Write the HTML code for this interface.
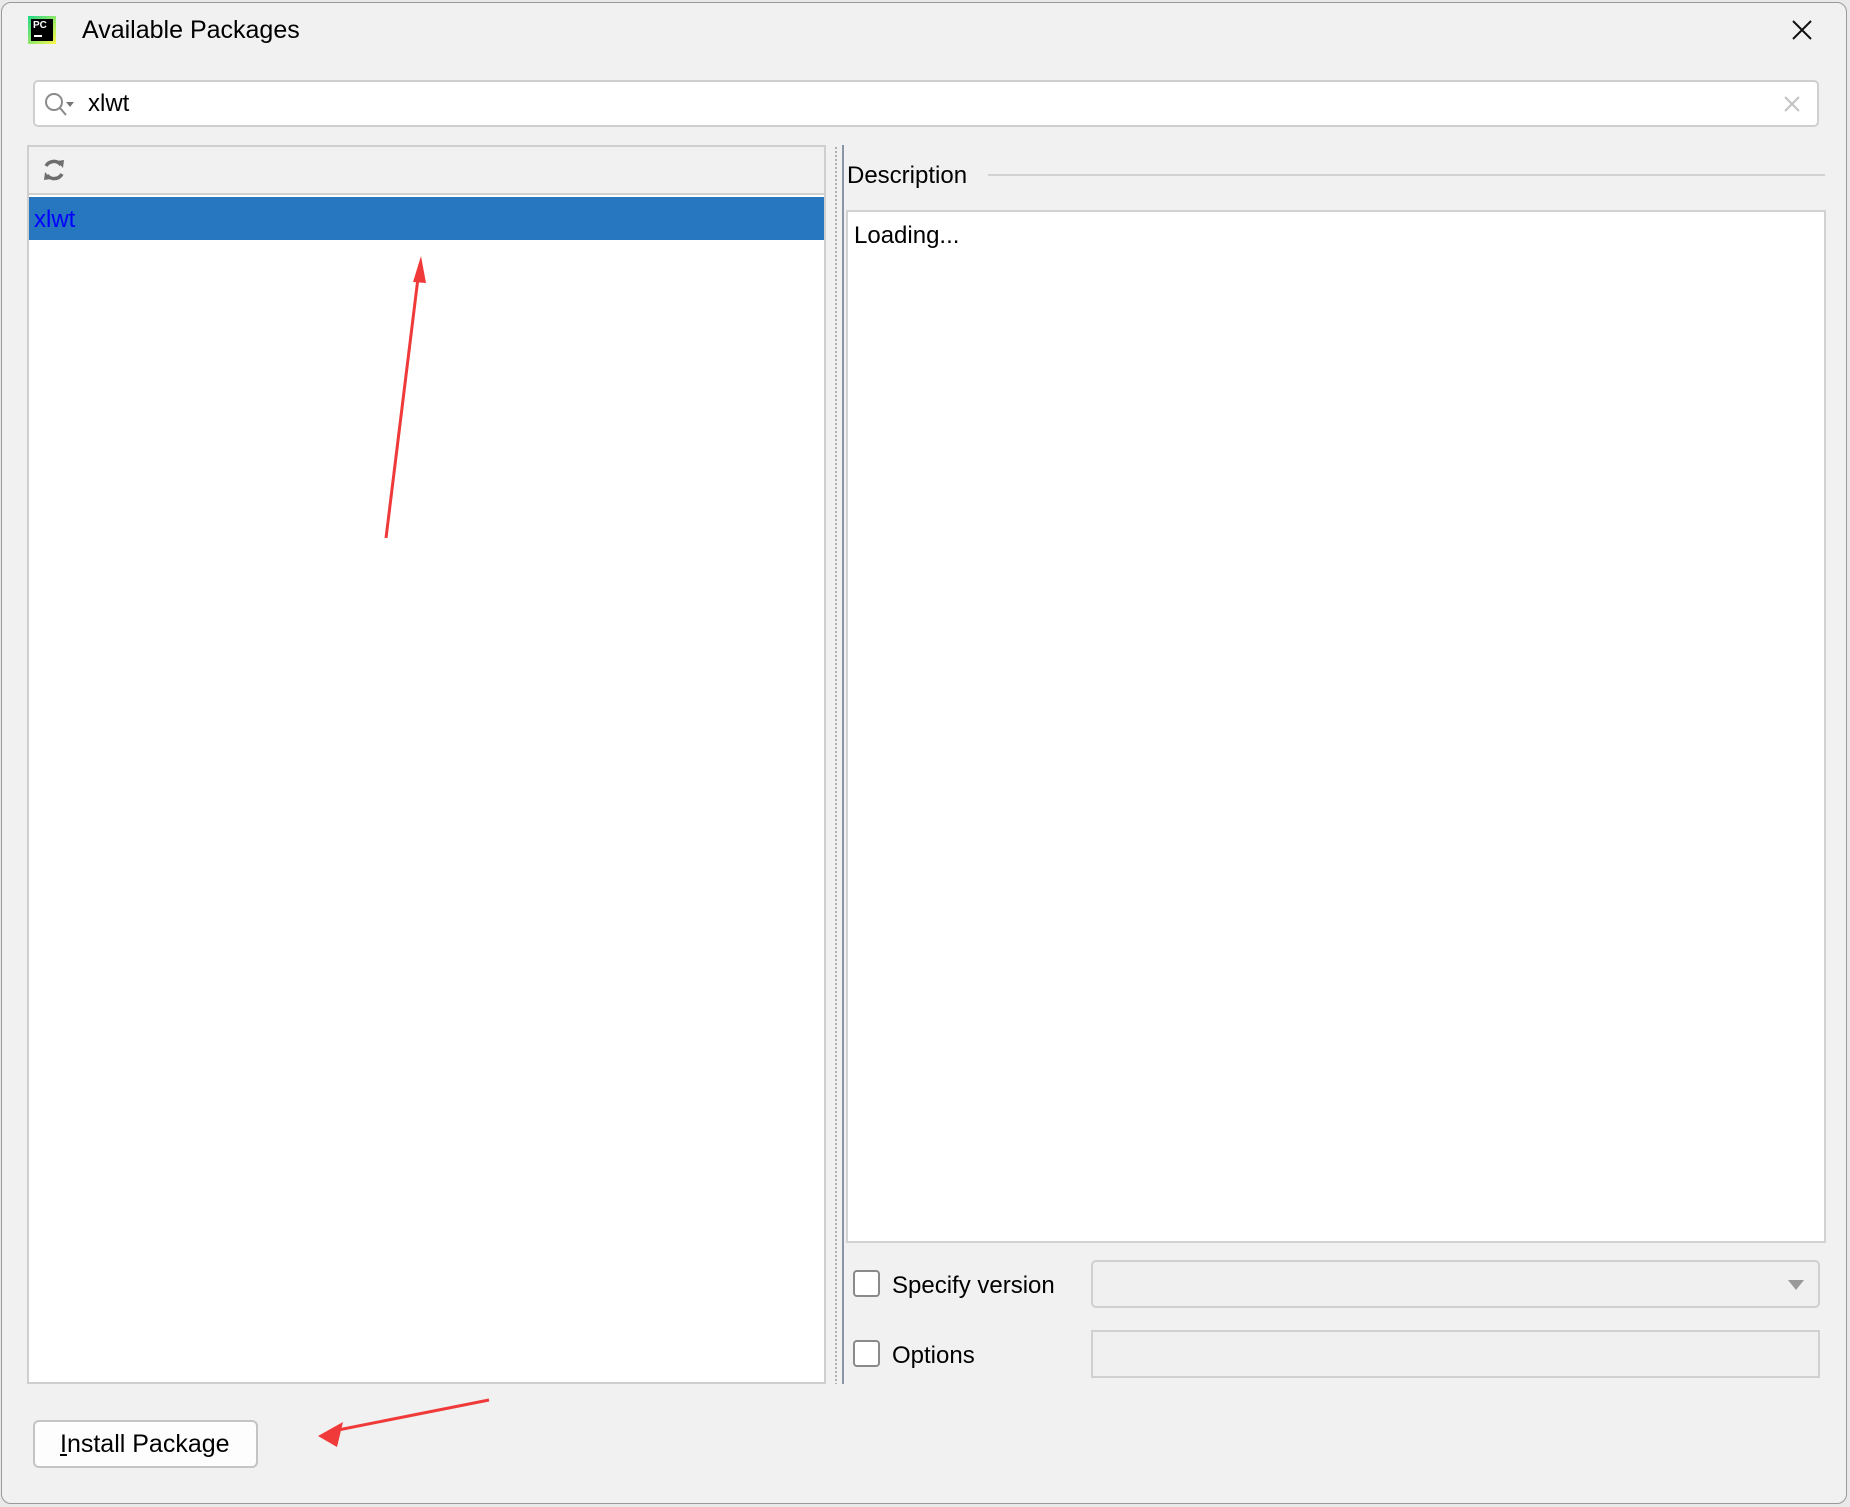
<!DOCTYPE html>
<html><head><meta charset="utf-8"><style>
*{box-sizing:border-box;margin:0;padding:0}
body{width:1850px;height:1507px;background:#e9e9e9;position:relative;overflow:hidden;font-family:"Segoe UI","Liberation Sans",sans-serif;color:#000}
.a{position:absolute}
.win{left:1px;top:2px;width:1846px;height:1502px;background:#f1f1f1;border:1px solid #9a9a9a;border-radius:10px}
.t{font-size:24px;white-space:nowrap}
</style></head><body>
<div class="a win"></div>
<div class="a" style="left:28px;top:16px;width:28px;height:28px;background:linear-gradient(135deg,#21d789,#fcf84a);"></div>
<div class="a" style="left:31px;top:19px;width:22px;height:22px;background:#000;color:#fff;font:bold 10px 'Liberation Sans',sans-serif;padding:1px 0 0 2px">PC<div style="position:absolute;left:3px;top:16px;width:8px;height:2px;background:#fff"></div></div>
<div class="a t" style="left:82px;top:16px;font-size:25px">Available Packages</div>
<svg class="a" style="left:1790px;top:18px" width="24" height="24"><path d="M3 3L21 21M21 3L3 21" stroke="#111" stroke-width="2"/></svg>
<div class="a" style="left:33px;top:80px;width:1786px;height:47px;background:#fff;border:2px solid #cfcfcf;border-radius:5px"></div>
<svg class="a" style="left:43px;top:91px" width="34" height="28"><circle cx="11" cy="11" r="8" fill="none" stroke="#8a8a8a" stroke-width="2"/><path d="M17 17L23 24" stroke="#8a8a8a" stroke-width="2"/><path d="M23 11h8l-4 5z" fill="#777"/></svg>
<div class="a t" style="left:88px;top:90px">xlwt</div>
<svg class="a" style="left:1783px;top:95px" width="18" height="18"><path d="M2 2L16 16M16 2L2 16" stroke="#c2c2c2" stroke-width="2"/></svg>
<div class="a" style="left:27px;top:145px;width:799px;height:1239px;background:#fff;border:2px solid #cfcfcf"></div>
<div class="a" style="left:29px;top:147px;width:795px;height:48px;background:#f1f1f1;border-bottom:2px solid #d0d0d0"></div>
<svg class="a" style="left:40px;top:156px" width="28" height="28"><path d="M21 9A9 9 0 0 0 6 10" fill="none" stroke="#6e6e6e" stroke-width="3.5"/><path d="M17 5l7-1-1 8z" fill="#6e6e6e"/><path d="M7 19A9 9 0 0 0 22 18" fill="none" stroke="#6e6e6e" stroke-width="3.5"/><path d="M11 23l-7 1 1-8z" fill="#6e6e6e"/></svg>
<div class="a" style="left:29px;top:197px;width:795px;height:43px;background:#2776c0"></div>
<div class="a t" style="left:34px;top:206px;color:#0000ff">xlwt</div>
<div class="a" style="left:834px;top:146px;width:5px;height:1238px;background-image:radial-gradient(#a8a8a8 1px,transparent 1.2px);background-size:4px 4px"></div>
<div class="a" style="left:842px;top:145px;width:2px;height:1239px;background:#8a96a6"></div>
<div class="a t" style="left:847px;top:162px">Description</div>
<div class="a" style="left:988px;top:174px;width:837px;height:2px;background:#d2d2d2"></div>
<div class="a" style="left:846px;top:210px;width:980px;height:1033px;background:#fff;border:2px solid #d2d2d2"></div>
<div class="a t" style="left:854px;top:222px">Loading...</div>
<div class="a" style="left:853px;top:1270px;width:27px;height:27px;background:#fff;border:2px solid #8a8a8a;border-radius:4px"></div>
<div class="a t" style="left:892px;top:1272px">Specify version</div>
<div class="a" style="left:1091px;top:1260px;width:729px;height:48px;border:2px solid #d0d0d0;border-radius:5px;background:#f0f0f0"></div>
<svg class="a" style="left:1787px;top:1278px" width="18" height="14"><path d="M1 2h16l-8 10z" fill="#999"/></svg>
<div class="a" style="left:853px;top:1340px;width:27px;height:27px;background:#fff;border:2px solid #8a8a8a;border-radius:4px"></div>
<div class="a t" style="left:892px;top:1342px">Options</div>
<div class="a" style="left:1091px;top:1330px;width:729px;height:48px;border:2px solid #d0d0d0;background:#f0f0f0"></div>
<div class="a" style="left:33px;top:1420px;width:225px;height:48px;background:#fdfdfd;border:2px solid #c4c4c4;border-radius:6px"></div>
<div class="a t" style="left:60px;top:1430px;font-size:25px"><u>I</u>nstall Package</div>
<svg class="a" style="left:0;top:0" width="1850" height="1507">
<path d="M386 538L418 278" stroke="#f03a3a" stroke-width="3"/>
<path d="M421 256L413 282L426 283z" fill="#f03a3a"/>
<path d="M489 1400L338 1430" stroke="#f03a3a" stroke-width="3"/>
<path d="M318 1436L343 1422L337 1447z" fill="#f03a3a"/>
</svg>
</body></html>
